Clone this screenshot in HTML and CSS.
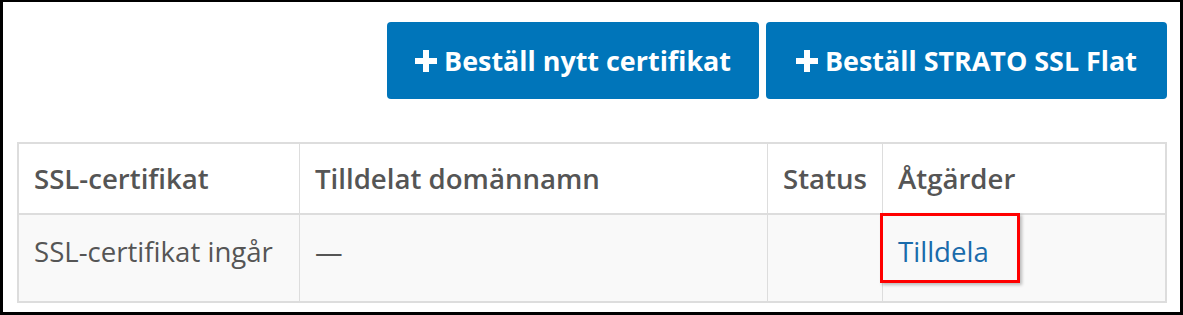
FILE: index.html
```html
<!DOCTYPE html>
<html lang="sv">

<head>
    <meta charset="UTF-8">
    <meta name="viewport" content="width=device-width, initial-scale=1.0">
    <title>SSL-certifikat</title>
    <link rel="stylesheet" href="styles.css">
</head>

<body>
    <div class="frame">
        <div class="toolbar">
            <button class="btn btn-narrow">
                <svg class="plus" viewBox="0 0 22 22"><path d="M8 0h6v8h8v6h-8v8H8v-8H0V8h8z" /></svg>
                Beställ nytt certifikat
            </button>
            <button class="btn">
                <svg class="plus" viewBox="0 0 22 22"><path d="M8 0h6v8h8v6h-8v8H8v-8H0V8h8z" /></svg>
                Beställ STRATO SSL Flat
            </button>
        </div>

        <table class="cert-table">
            <thead>
                <tr>
                    <th class="col-cert">SSL-certifikat</th>
                    <th class="col-domain">Tilldelat domännamn</th>
                    <th class="col-status">Status</th>
                    <th>Åtgärder</th>
                </tr>
            </thead>
            <tbody>
                <tr>
                    <td>SSL-certifikat ingår</td>
                    <td>—</td>
                    <td></td>
                    <td class="actions">
                        <a href="#">Tilldela</a>
                        <span class="highlight"></span>
                    </td>
                </tr>
            </tbody>
        </table>
    </div>
</body>

</html>
```

FILE: styles.css
```css
body {
    margin: 0;
    padding: 0;
    background-color: #fff;
    font-family: "Open Sans", Arial, sans-serif;
    color: #555;
}

.frame {
    box-sizing: border-box;
    height: 315px;
    border-style: solid;
    border-color: #000;
    border-width: 2px 3px 3px 3px;
    padding: 20px 13px 0 14px;
}

.toolbar {
    display: flex;
    justify-content: flex-end;
    gap: 7px;
}

.btn {
    display: flex;
    align-items: center;
    gap: 7px;
    height: 77px;
    padding: 0 30px;
    border: 0;
    border-radius: 4px;
    background-color: #0075ba;
    color: #fff;
    font-family: "Open Sans", Arial, sans-serif;
    font-size: 26.9px;
    font-weight: bold;
    cursor: pointer;
}

.btn-narrow {
    padding: 0 28px;
}

.btn .plus {
    width: 22px;
    height: 22px;
    fill: #fff;
}

.cert-table {
    width: 100%;
    margin-top: 43px;
    border-collapse: collapse;
    border: 2px solid #ddd;
    font-size: 27.6px;
    line-height: 36px;
}

th,
td {
    border: 1px solid #ddd;
    text-align: left;
    vertical-align: top;
}

th {
    padding: 16px 15px 17px;
    border-bottom: 2px solid #ddd;
    font-weight: 600;
    color: #555;
}

td {
    padding: 18px 15px 32px;
    background-color: #f9f9f9;
}

.col-cert {
    width: 250px;
}

.col-domain {
    width: 437px;
}

.col-status {
    width: 84px;
}

.actions {
    position: relative;
}

.actions a {
    color: #1a6bab;
    text-decoration: none;
}

.highlight {
    position: absolute;
    left: -3px;
    top: -2px;
    width: 134px;
    height: 64px;
    border: 3px solid #f00;
    box-shadow: 2px 2px 3px rgba(0, 0, 0, 0.25);
}
```
